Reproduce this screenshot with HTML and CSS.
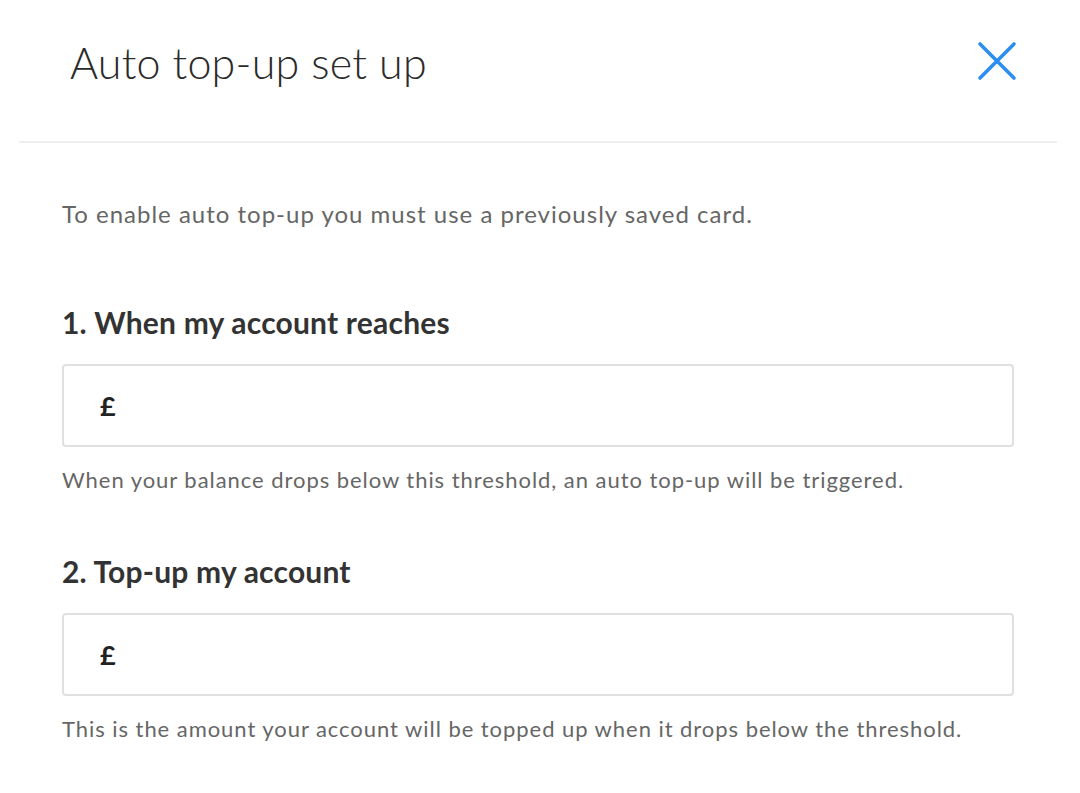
FILE: index.html
```html
<!DOCTYPE html>
<html lang="en">
<head>
<meta charset="utf-8">
<title>Auto top-up set up</title>
<link rel="stylesheet" href="styles.css">
</head>
<body>
<div class="modal">
  <header class="modal-header">
    <h1 class="modal-title">Auto top-up set up</h1>
    <button class="close-btn" aria-label="Close">
      <svg width="40" height="40" viewBox="0 0 40 40"><path d="M3 3 L37 37 M37 3 L3 37" stroke="#2b8ef0" stroke-width="3.6" stroke-linecap="round" fill="none"/></svg>
    </button>
  </header>
  <div class="modal-body">
    <p class="intro">To enable auto top-up you must use a previously saved card.</p>
    <section class="field">
      <h2 class="field-label">1. When my account reaches</h2>
      <div class="input-box"><span class="currency">£</span></div>
      <p class="hint">When your balance drops below this threshold, an auto top-up will be triggered.</p>
    </section>
    <section class="field">
      <h2 class="field-label">2. Top-up my account</h2>
      <div class="input-box"><span class="currency">£</span></div>
      <p class="hint">This is the amount your account will be topped up when it drops below the threshold.</p>
    </section>
  </div>
</div>
</body>
</html>
```
FILE: styles.css
```css
* { box-sizing: border-box; }
html, body { margin: 0; padding: 0; background: #fff; }
body { font-family: Lato, "Open Sans", sans-serif; }
.modal { width: 1080px; padding: 0 23px 0 19px; }
.modal-header {
  display: flex;
  align-items: flex-start;
  justify-content: space-between;
  height: 143px;
  padding: 37px 40px 0 51px;
  border-bottom: 2px solid #efefef;
}
.modal-title {
  margin: 0;
  font-weight: 300;
  font-size: 43px;
  line-height: 52px;
  color: #2b2b2b;
  letter-spacing: 0.2px;
}
.close-btn {
  border: 0;
  background: none;
  padding: 0;
  margin-top: 4px;
  width: 40px;
  height: 40px;
  cursor: pointer;
}
.close-btn svg { display: block; }
.modal-body { padding: 56px 43px 0 43px; }
.intro {
  margin: 0;
  font-size: 24px;
  line-height: 30px;
  letter-spacing: 1px;
  color: #666;
}
.field { margin-top: 75px; }
.field + .field { margin-top: 58px; }
.field-label {
  margin: 0;
  font-size: 30px;
  line-height: 36px;
  font-weight: 700;
  letter-spacing: 0.2px;
  color: #333;
}
.input-box {
  margin-top: 24px;
  height: 83px;
  border: 2px solid #e0e0e0;
  border-radius: 4px;
  display: flex;
  align-items: center;
  padding-left: 36px;
}
.currency {
  font-size: 27px;
  font-weight: 700;
  color: #222;
}
.hint {
  margin: 18px 0 0;
  font-size: 22px;
  line-height: 30px;
  letter-spacing: 0.95px;
  color: #666;
}
```
